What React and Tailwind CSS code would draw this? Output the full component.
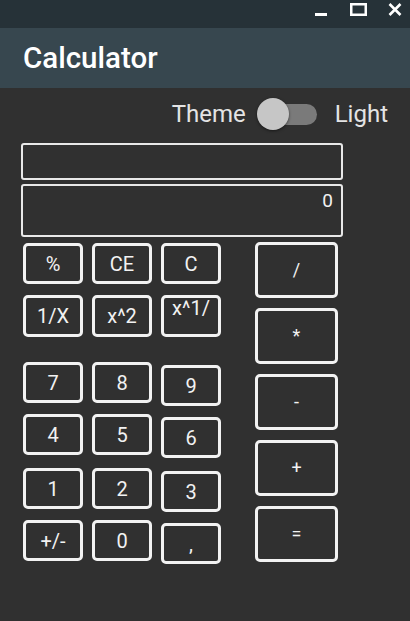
import React from "react";

function Key({ label, className = "", top = false }) {
  return (
    <div
      className={`flex ${top ? "items-start pt-0" : "items-center"} justify-center border-[3px] border-[#f2f2f2] rounded-[5px] leading-[20px] text-[#f2f2f2] ${className}`}
    >
      {label}
    </div>
  );
}

function Row({ keys }) {
  return (
    <div className="flex items-start gap-[9px]">
      {keys.map((k, i) => (
        <Key
          key={i}
          label={k.l}
          top={k.top}
          className={`w-[60px] text-[20px] ${k.h || "h-[41px]"} ${k.mt || ""}`}
        />
      ))}
    </div>
  );
}

export default function App() {
  return (
    <div
      className="w-[410px] h-[621px] flex flex-col bg-[#303030] overflow-hidden"
      style={{ fontFamily: "Roboto, 'Noto Sans', sans-serif" }}
    >
      {/* title bar */}
      <div className="h-[28px] bg-[#263238] flex items-start justify-end pt-[3px] pr-[8px]">
        <svg width="12" height="13" viewBox="0 0 12 13" className="mr-[23px]">
          <rect x="0" y="10" width="12" height="3" fill="#ffffff" />
        </svg>
        <svg width="17" height="13" viewBox="0 0 17 13" className="mr-[21px]">
          <rect x="1.25" y="1.25" width="14.5" height="10.5" fill="none" stroke="#ffffff" strokeWidth="2.5" />
        </svg>
        <svg width="14" height="13" viewBox="0 0 14 13">
          <path d="M1.5 1 L12.5 12 M12.5 1 L1.5 12" stroke="#ffffff" strokeWidth="2.6" />
        </svg>
      </div>

      {/* header */}
      <div className="h-[60px] bg-[#37474f] flex items-center pl-[23px] pt-[1px]">
        <span className="text-[29.5px] font-medium text-white">Calculator</span>
      </div>

      {/* theme row */}
      <div className="h-[53px] flex items-center justify-end pr-[22px] pb-[1px]">
        <span className="text-[24px] text-[#e4e4e4] mr-[11px]">Theme</span>
        <div className="relative w-[60px] h-[31px] flex items-center">
          <div className="ml-[8px] w-[52px] h-[21px] rounded-full bg-[#7a7a7a]" />
          <div className="absolute left-0 top-0 w-[32px] h-[32px] -mt-[0.5px] rounded-full bg-[#c6c6c6] shadow-[0_1px_3px_rgba(0,0,0,0.5)]" />
        </div>
        <span className="text-[24px] text-[#e4e4e4] ml-[18px]">Light</span>
      </div>

      {/* displays */}
      <div className="px-[21px] flex flex-col gap-[4px] pt-[2px]">
        <div className="w-[322px] h-[37px] border-[2.5px] border-[#e8e8e8] rounded-[3px]" />
        <div className="w-[322px] h-[53px] border-[2.5px] border-[#e8e8e8] rounded-[3px] flex justify-end pr-[8px] pt-[3px]">
          <span className="text-[19px] leading-[24px] text-[#f2f2f2]">0</span>
        </div>
      </div>

      {/* keypad */}
      <div className="flex pl-[23px] pt-[6px] gap-[34px]">
        <div className="flex flex-col">
          <Row keys={[{ l: "%" }, { l: "CE" }, { l: "C" }]} />
          <div className="mt-[11px]">
            <Row keys={[{ l: "1/X", h: "h-[42px]" }, { l: "x^2", h: "h-[42px]" }, { l: "x^1/", h: "h-[42px]", top: true }]} />
          </div>
          <div className="mt-[25px]">
            <Row keys={[{ l: "7" }, { l: "8" }, { l: "9", mt: "mt-[3px]" }]} />
          </div>
          <div className="mt-[8px]">
            <Row keys={[{ l: "4" }, { l: "5" }, { l: "6", mt: "mt-[3px]" }]} />
          </div>
          <div className="mt-[10px]">
            <Row keys={[{ l: "1" }, { l: "2" }, { l: "3", mt: "mt-[3px]" }]} />
          </div>
          <div className="mt-[8px]">
            <Row keys={[{ l: "+/-" }, { l: "0" }, { l: ",", mt: "mt-[3px]" }]} />
          </div>
        </div>
        <div className="flex flex-col gap-[10px] -mt-[1px]">
          {["/", "*", "-", "+", "="].map((k) => (
            <Key key={k} label={k} className="w-[83px] h-[56px] text-[18px]" />
          ))}
        </div>
      </div>
    </div>
  );
}
